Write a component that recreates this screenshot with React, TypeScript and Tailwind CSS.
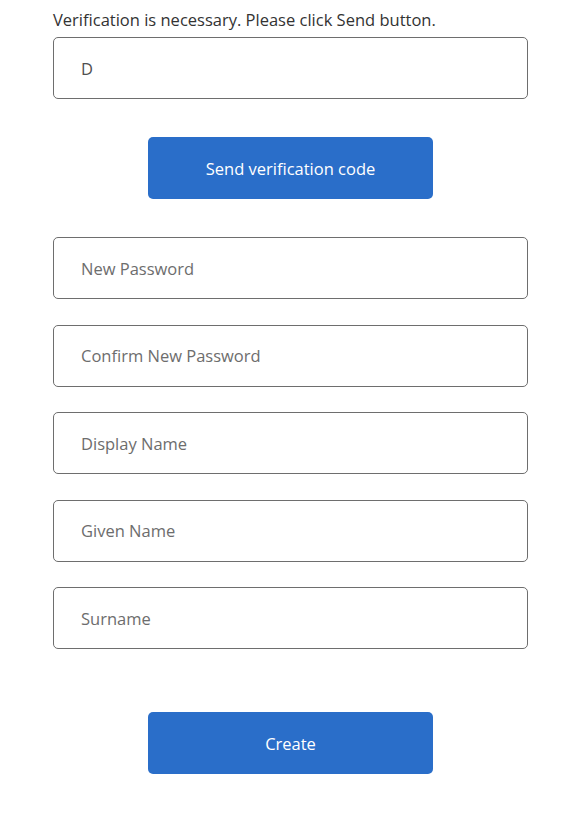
const fields = ["New Password", "Confirm New Password", "Display Name", "Given Name", "Surname"];

const Field = ({ placeholder, value }: { placeholder?: string; value?: string }) => (
  <input
    type="text"
    defaultValue={value}
    placeholder={placeholder}
    className="block h-[62px] w-full rounded-[5px] border border-[#6e6e6e] bg-white px-[27px] text-[16.5px] text-[#505050] outline-none placeholder:text-[#6d6d6d]"
  />
);

const App = () => {
  return (
    <div className="min-h-screen bg-white font-['Open_Sans',sans-serif]">
      <div className="ml-[53px] w-[475px] pt-[8px]">
        <p className="text-[16.5px] leading-[24px] text-[#333]">
          Verification is necessary. Please click Send button.
        </p>
        <div className="mt-[5px]">
          <Field value="D" />
        </div>
        <div className="flex justify-center py-[38px]">
          <button className="h-[62px] w-[285px] rounded-[5px] bg-[#2a6ec9] pt-[2px] text-[16.5px] text-white">
            Send verification code
          </button>
        </div>
        <div className="flex flex-col gap-[25.5px]">
          {fields.map((f) => (
            <Field key={f} placeholder={f} />
          ))}
        </div>
        <div className="flex justify-center pt-[63px]">
          <button className="h-[62px] w-[285px] rounded-[5px] bg-[#2a6ec9] pt-[2px] text-[16.5px] text-white">
            Create
          </button>
        </div>
      </div>
    </div>
  );
};

export default App;
